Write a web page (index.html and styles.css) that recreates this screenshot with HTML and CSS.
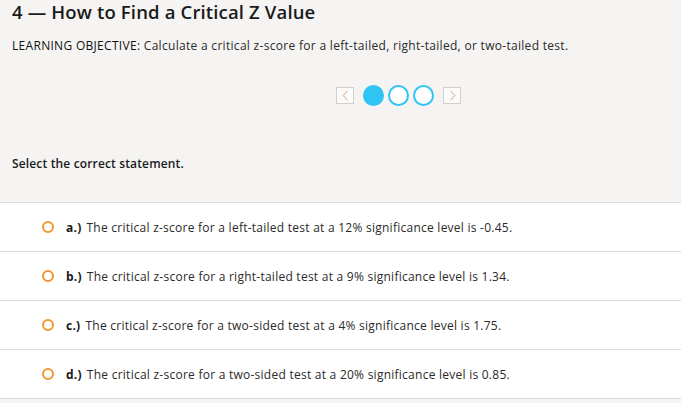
FILE: index.html
```html
<!DOCTYPE html>
<html>
<head>
<meta charset="utf-8">
<link rel="stylesheet" href="styles.css">
</head>
<body>
<div class="page">
  <header class="head">
    <h1 class="title">4 — How to Find a Critical Z Value</h1>
    <p class="objective"><span class="obj-label">LEARNING OBJECTIVE:</span> Calculate a critical z-score for a left-tailed, right-tailed, or two-tailed test.</p>
    <div class="pager">
      <button class="nav-btn" aria-label="previous">
        <svg width="9" height="11" viewBox="0 0 9 11"><path d="M6.5 0.8 L2.2 5.5 L6.5 10.2" fill="none" stroke="#e8a06a" stroke-width="1"/></svg>
      </button>
      <span class="dot dot-active"></span>
      <span class="dot"></span>
      <span class="dot"></span>
      <button class="nav-btn" aria-label="next">
        <svg width="9" height="11" viewBox="0 0 9 11"><path d="M2.5 0.8 L6.8 5.5 L2.5 10.2" fill="none" stroke="#e8a06a" stroke-width="1"/></svg>
      </button>
    </div>
    <p class="prompt">Select the correct statement.</p>
  </header>
  <ul class="options">
    <li class="option"><span class="radio"></span><span class="opt-key">a.)</span><span class="opt-text">The critical z-score for a left-tailed test at a 12% significance level is -0.45.</span></li>
    <li class="option"><span class="radio"></span><span class="opt-key">b.)</span><span class="opt-text">The critical z-score for a right-tailed test at a 9% significance level is 1.34.</span></li>
    <li class="option"><span class="radio"></span><span class="opt-key">c.)</span><span class="opt-text">The critical z-score for a two-sided test at a 4% significance level is 1.75.</span></li>
    <li class="option"><span class="radio"></span><span class="opt-key">d.)</span><span class="opt-text">The critical z-score for a two-sided test at a 20% significance level is 0.85.</span></li>
  </ul>
</div>
</body>
</html>
```

FILE: styles.css
```css
html, body {
  margin: 0;
  padding: 0;
  background: #f5f4f3;
}
body {
  font-family: "Open Sans", "Liberation Sans", Arial, sans-serif;
  color: #1f1f1f;
  width: 681px;
  height: 403px;
  overflow: hidden;
}
.head {
  background: #f5f4f3;
  padding: 0 12px;
  height: 203px;
  box-sizing: border-box;
  border-bottom: 1px solid #dcdcdc;
}
.title {
  margin: 0;
  font-size: 18.5px;
  font-weight: 600;
  line-height: 23px;
  letter-spacing: 0.15px;
  color: #1a1a1a;
}
.objective {
  margin: 16px 0 0 0;
  font-size: 12px;
  line-height: 14px;
  letter-spacing: 0.3px;
  color: #2a2a2a;
}
.obj-label {
  font-weight: 400;
  color: #111;
}
.pager {
  margin-top: 31px;
  margin-left: 324px;
  display: flex;
  align-items: center;
  gap: 4px;
  height: 22px;
}
.nav-btn {
  width: 18px;
  height: 17px;
  box-sizing: border-box;
  border: 1px solid #d0cfcd;
  background: #fbfbfb;
  padding: 0;
  display: flex;
  align-items: center;
  justify-content: center;
  margin: 0 5px;
}
.nav-btn:first-child { margin-left: 0; }
.dot {
  width: 21px;
  height: 21px;
  box-sizing: border-box;
  border-radius: 50%;
  border: 2.5px solid #2ec4f4;
  background: #fff;
}
.dot-active {
  background: #2ec4f4;
}
.prompt {
  margin: 51px 0 0 0;
  font-size: 12px;
  line-height: 14px;
  letter-spacing: 0.15px;
  font-weight: 600;
  color: #1a1a1a;
}
.options {
  list-style: none;
  margin: 0;
  padding: 0;
  background: #fff;
}
.option {
  display: flex;
  align-items: center;
  height: 48px;
  border-bottom: 1px solid #dcdcdc;
  padding-left: 42px;
  font-size: 12px;
  letter-spacing: 0.25px;
  color: #2a2a2a;
}
.radio {
  width: 12px;
  height: 12px;
  box-sizing: border-box;
  border-radius: 50%;
  border: 2px solid #f0972f;
  margin-right: 12px;
  flex: none;
}
.opt-key {
  font-weight: 700;
  color: #1a1a1a;
  margin-right: 5px;
}
```
